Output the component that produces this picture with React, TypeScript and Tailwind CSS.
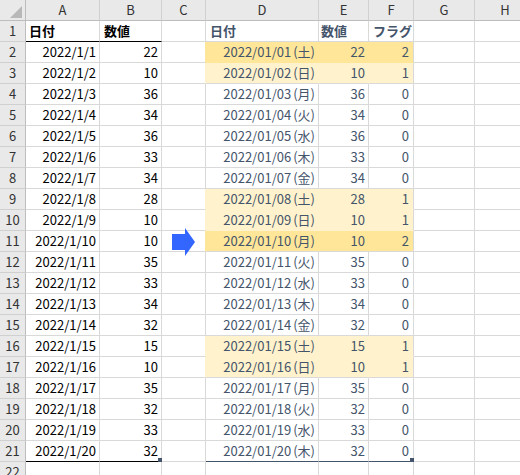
import React from "react";
import clsx from "clsx";

const days = ["土", "日", "月", "火", "水", "木", "金"];
const values = [22, 10, 36, 34, 36, 33, 34, 28, 10, 10, 35, 33, 34, 32, 15, 10, 35, 32, 33, 32];
const flags = [2, 1, 0, 0, 0, 0, 0, 1, 1, 2, 0, 0, 0, 0, 1, 1, 0, 0, 0, 0];

const letters = [
  { l: "A", w: "w-[74px]" },
  { l: "B", w: "w-[62px]" },
  { l: "C", w: "w-[44px]" },
  { l: "D", w: "w-[113px]" },
  { l: "E", w: "w-[50px]" },
  { l: "F", w: "w-[45px]" },
  { l: "G", w: "w-[61px]" },
  { l: "H", w: "w-[61px]" },
];

const pad = (n: number) => String(n).padStart(2, "0");

// 0 = no fill, 1 = light, 2 = dark
function fillOf(r: number) {
  if (r < 2 || r > 21) return 0;
  return flags[r - 2];
}

const bgClass = ["bg-white", "bg-[#fff2cc]", "bg-[#ffe699]"];
const borderR = ["border-r-[#d9d9d9]", "border-r-[#fff2cc]", "border-r-[#ffe699]"];
const borderB = ["border-b-[#d9d9d9]", "border-b-[#fff2cc]", "border-b-[#ffe699]"];

function Handle() {
  return <div className="absolute right-[-1px] bottom-[-1px] h-[4px] w-[4px] bg-[#44546a]" />;
}

function Row({ r }: { r: number }) {
  const fill = fillOf(r);
  const nextFill = fillOf(r + 1);
  const data = r >= 2 && r <= 21;
  const i = r - 2;

  const base = "relative box-border flex h-full shrink-0 items-center border-r border-b";

  // bottom border colour for the right table cells
  const rightB =
    r === 21 ? "border-b-[#44546a]" : fill && nextFill ? borderB[fill] : "border-b-[#d9d9d9]";

  return (
    <div className="flex h-[21px]">
      <div className="box-border flex h-full w-[26px] shrink-0 items-center justify-center border-r border-b border-r-[#bdbdbd] border-b-[#d0d0d0] bg-[#e9e9e9] text-[#333]">
        {r}
      </div>

      {/* A */}
      <div
        className={clsx(
          base,
          "w-[74px] border-r-[#d9d9d9]",
          r === 1 || r === 21 ? "border-b-black" : "border-b-[#d9d9d9]",
          r === 1 ? "pl-[3px] font-bold" : "justify-end pr-[3px]"
        )}
      >
        {r === 1 ? "日付" : data ? `2022/1/${r - 1}` : ""}
      </div>

      {/* B */}
      <div
        className={clsx(
          base,
          "w-[62px] border-r-[#d9d9d9]",
          r === 1 || r === 21 ? "border-b-black" : "border-b-[#d9d9d9]",
          r === 1 ? "pl-[4px] font-bold" : "justify-end pr-[3px]"
        )}
      >
        {r === 1 ? "数値" : data ? values[i] : ""}
        {r === 21 && <Handle />}
      </div>

      {/* C */}
      <div className={clsx(base, "w-[44px] border-b-[#d9d9d9]", borderR[fill])} />

      {/* D */}
      <div
        className={clsx(
          base,
          "w-[113px] text-[#44546a]",
          bgClass[fill],
          borderR[fill],
          rightB,
          r === 1 ? "pl-[4px] font-bold" : "justify-end pr-[3px]"
        )}
      >
        {r === 1 ? (
          "日付"
        ) : data ? (
          <span>
            2022/01/{pad(r - 1)}
            <span className="ml-[2px]">({days[i % 7]})</span>
          </span>
        ) : (
          ""
        )}
      </div>

      {/* E */}
      <div
        className={clsx(
          base,
          "w-[50px] text-[#44546a]",
          bgClass[fill],
          borderR[fill],
          rightB,
          r === 1 ? "pl-[2px] font-bold" : "justify-end pr-[3px]"
        )}
      >
        {r === 1 ? "数値" : data ? values[i] : ""}
      </div>

      {/* F */}
      <div
        className={clsx(
          base,
          "w-[45px] border-r-[#d9d9d9] text-[#44546a]",
          bgClass[fill],
          rightB,
          r === 1 ? "pl-[4px] font-bold" : "justify-end pr-[4px]"
        )}
      >
        {r === 1 ? "フラグ" : data ? flags[i] : ""}
        {r === 21 && <Handle />}
      </div>

      <div className={clsx(base, "w-[61px] border-r-[#d9d9d9] border-b-[#d9d9d9]")} />
      <div className={clsx(base, "w-[61px] border-r-[#d9d9d9] border-b-[#d9d9d9]")} />
    </div>
  );
}

export default function App() {
  const rows = Array.from({ length: 22 }, (_, k) => k + 1);

  return (
    <div
      className="relative h-[475px] w-[520px] overflow-hidden bg-white text-[13px] leading-[20px] text-black"
      style={{ fontFamily: '"Noto Sans CJK JP", "Noto Sans", sans-serif' }}
    >
      {/* column headers */}
      <div className="flex h-[21px]">
        <div className="box-border flex h-full w-[26px] shrink-0 items-end justify-end border-r border-b border-[#bdbdbd] bg-[#e9e9e9] pr-[3px] pb-[2px]">
          <svg width="12" height="12" viewBox="0 0 12 12">
            <polygon points="12,0 12,12 0,12" fill="#b8b8b8" />
          </svg>
        </div>
        {letters.map((c) => (
          <div
            key={c.l}
            className={clsx(
              "box-border flex h-full shrink-0 items-center justify-center border-r border-b border-r-[#d0d0d0] border-b-[#bdbdbd] bg-[#e9e9e9] text-[#333]",
              c.w
            )}
          >
            {c.l}
          </div>
        ))}
      </div>

      {rows.map((r) => (
        <Row key={r} r={r} />
      ))}

      {/* arrow */}
      <svg className="absolute left-[172px] top-[228px]" width="23" height="28" viewBox="0 0 23 28">
        <polygon points="0,6 13,6 13,0 23,14 13,28 13,22 0,22" fill="#3366ff" />
      </svg>
    </div>
  );
}
